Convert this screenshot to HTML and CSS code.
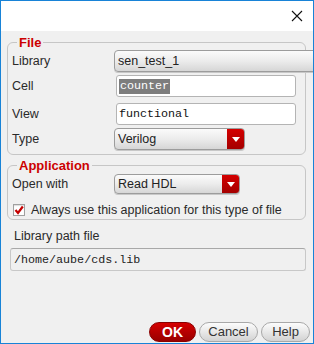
FILE: index.html
```html
<!DOCTYPE html>
<html>
<head>
<meta charset="utf-8">
<link rel="stylesheet" href="styles.css">
</head>
<body>
<div class="window">
  <div class="titlebar">
    <svg class="close" width="12" height="12" viewBox="0 0 12 12"><path d="M1 1 L11 11 M11 1 L1 11" stroke="#111" stroke-width="1.1" fill="none"/></svg>
  </div>
  <div class="content">
    <fieldset class="group file">
      <legend>File</legend>
      <div class="row r-lib"><span class="label">Library</span><div class="combo wide">sen_test_1</div></div>
      <div class="row r-cell"><span class="label">Cell</span><div class="input"><span class="sel">counter</span></div></div>
      <div class="row r-view"><span class="label">View</span><div class="input">functional</div></div>
      <div class="row r-type"><span class="label">Type</span><div class="combo drop type">Verilog<span class="arrow"></span></div></div>
    </fieldset>
    <fieldset class="group app">
      <legend>Application</legend>
      <div class="row r-open"><span class="label">Open with</span><div class="combo drop open">Read HDL<span class="arrow"></span></div></div>
      <div class="check-row">
        <span class="checkbox"><svg width="10" height="10" viewBox="0 0 10 10"><path d="M1.5 5 L4 8 L8.8 1.5" stroke="#c40000" stroke-width="2.2" fill="none"/></svg></span>
        <span class="check-text">Always use this application for this type of file</span>
      </div>
    </fieldset>
    <div class="path-label">Library path file</div>
    <div class="path-field">/home/aube/cds.lib</div>
    <div class="buttons">
      <button class="btn ok">OK</button>
      <button class="btn cancel">Cancel</button>
      <button class="btn help">Help</button>
    </div>
  </div>
</div>
</body>
</html>
```
FILE: styles.css
```css
* { box-sizing: border-box; }
html, body { margin: 0; padding: 0; background: #f0f0f0; }
body { font-family: "Liberation Sans", Arial, sans-serif; font-size: 12px; color: #222; }
.window {
  width: 314px; height: 344px;
  border: 1px solid #1883d7;
  background: #f0f0f0;
  display: flex; flex-direction: column;
  overflow: hidden;
}
.titlebar {
  height: 30px; background: #fff;
  display: flex; justify-content: flex-end; align-items: center;
  padding-right: 10px;
  flex: none;
}
.close { display: block; margin-top: 0; }
.content { flex: 1; display: flex; flex-direction: column; position: relative; }
.group {
  margin: 4px 7px 0 6px;
  padding: 0 4px 4px 4px;
  border: 1px solid #c6c6c6;
  border-radius: 6px;
  min-width: 0;
}
.group.app { margin-top: 3px; padding-bottom: 3px; }
.group legend {
  color: #cc0000; font-weight: bold; font-size: 13px; line-height: 15px;
  padding: 0 2px; margin-left: 5px;
}
.row { display: flex; align-items: center; height: 22px; }
.label { width: 102px; flex: none; font-size: 12.5px; color: #2a2a2a; }
.r-cell { margin-top: 3px; }
.r-view { margin-top: 6px; }
.r-type { margin-top: 3px; }
.r-open { margin-top: 1px; height: 20px; }
.combo {
  height: 22px; border: 1px solid #9c9c9c; border-radius: 4px;
  background: linear-gradient(#fbfbfb, #ececec 50%, #d6d6d6);
  box-shadow: 0 1px 0 #c8c8c8;
  display: flex; align-items: center; padding-left: 3px;
  font-size: 12.5px; color: #222;
  position: relative; overflow: hidden;
}
.combo.wide { width: 210px; flex: none; position: relative; z-index: 2; }
.combo.type { width: 131px; }
.combo.open { width: 126px; height: 20px; }
.arrow {
  position: absolute; right: 0; top: 0; bottom: 0; width: 17px;
  background: linear-gradient(#d40000, #a40000);
}
.arrow::after {
  content: ""; position: absolute; left: 5px; top: 50%; margin-top: -2px;
  border-left: 4px solid transparent; border-right: 4px solid transparent;
  border-top: 5px solid #fff;
}
.input {
  margin-left: 2px; width: 180px; height: 22px;
  background: #fff; border: 1px solid #b4b4b4; border-radius: 3px;
  font-family: "Liberation Mono", "Courier New", monospace; font-size: 11.7px;
  display: flex; align-items: center; padding-left: 2px; color: #111;
}
.sel { background: #7d7d7d; color: #fff; padding: 0 1px; line-height: 15px; }
.check-row { display: flex; align-items: center; margin-top: 10px; height: 12px; margin-left: 1px; }
.checkbox {
  width: 12px; height: 12px; border: 1px solid #a0a0a0; background: #fff;
  display: flex; align-items: center; justify-content: center; flex: none;
  box-shadow: inset 0 1px 1px #ddd;
}
.check-text { margin-left: 6px; font-size: 12.5px; color: #2a2a2a; }
.path-label { margin: 9px 0 0 13px; font-size: 12.5px; color: #2a2a2a; line-height: 15px; }
.path-field {
  margin: 4px 7px 0 9px; height: 23px;
  border: 1px solid #c8c8c8; border-top-color: #a8a8a8; border-radius: 3px;
  background: #f0f0f0;
  font-family: "Liberation Mono", "Courier New", monospace; font-size: 11.7px;
  display: flex; align-items: center; padding-left: 3px; color: #222;
}
.buttons { margin-top: auto; display: flex; justify-content: flex-end; gap: 3px; padding: 0 3px 1px 0; }
.btn {
  height: 20px; border-radius: 10px; border: 1px solid #a8a8a8;
  background: linear-gradient(#fcfcfc, #e8e8e8 50%, #d2d2d2);
  font-family: "Liberation Sans", Arial, sans-serif; font-size: 13px; color: #333;
  padding: 0; margin: 0; line-height: 18px;
}
.btn.ok { width: 47px; background: linear-gradient(#d60000, #b00000 60%, #9a0000); border-color: #8a0000; color: #fff; font-weight: bold; font-size: 14px; }
.btn.cancel { width: 59px; }
.btn.help { width: 49px; }
```
